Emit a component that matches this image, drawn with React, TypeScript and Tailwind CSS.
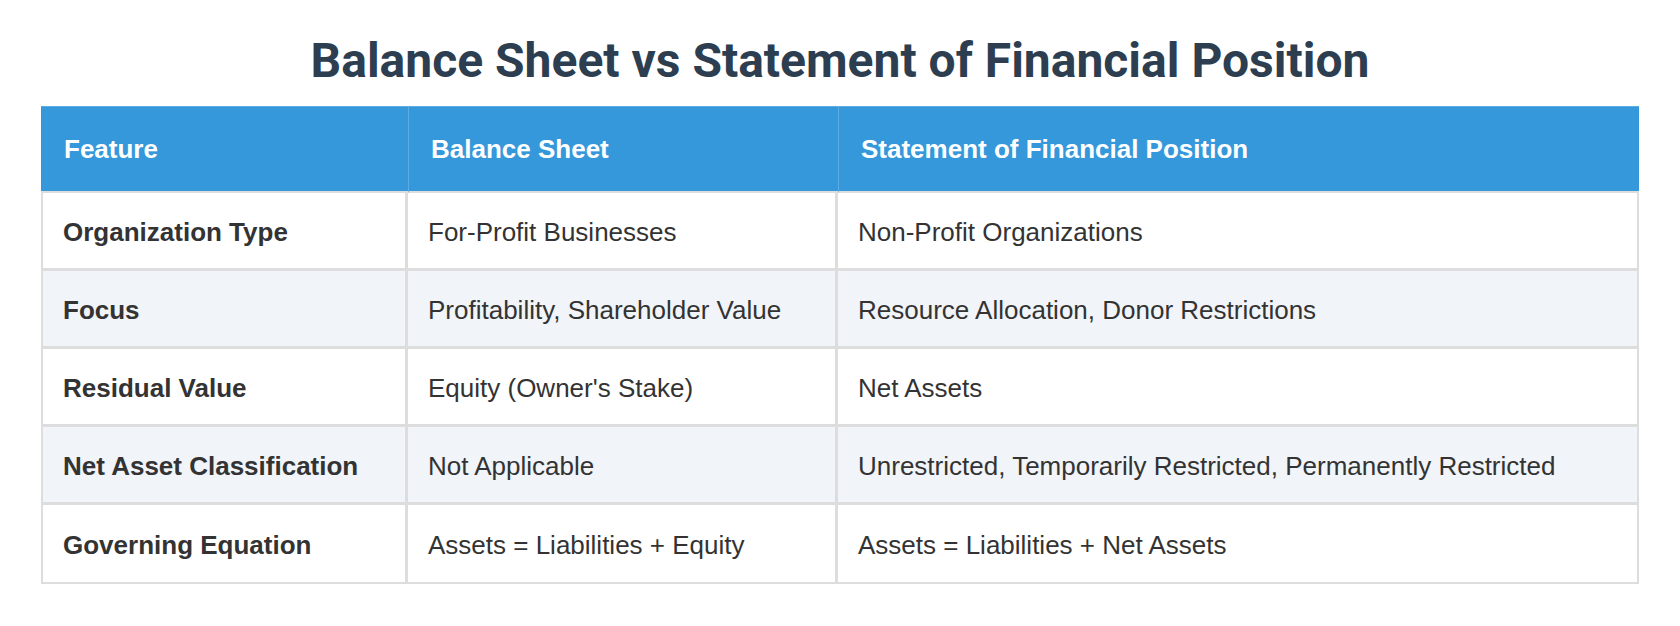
import React from 'react';

type Row = {
    feature: string;
    balance: string;
    statement: string;
};

const rows: Row[] = [
    { feature: 'Organization Type', balance: 'For-Profit Businesses', statement: 'Non-Profit Organizations' },
    { feature: 'Focus', balance: 'Profitability, Shareholder Value', statement: 'Resource Allocation, Donor Restrictions' },
    { feature: 'Residual Value', balance: "Equity (Owner's Stake)", statement: 'Net Assets' },
    { feature: 'Net Asset Classification', balance: 'Not Applicable', statement: 'Unrestricted, Temporarily Restricted, Permanently Restricted' },
    { feature: 'Governing Equation', balance: 'Assets = Liabilities + Equity', statement: 'Assets = Liabilities + Net Assets' },
];

const App: React.FC = () => {
    return (
        <div className="min-h-screen bg-white px-[41px] pt-[34px] font-['Liberation_Sans',Arial,sans-serif]">
            <h1 className="mb-[19px] text-center font-['Roboto',sans-serif] text-[48px] font-bold leading-[53px] text-[#2c3e50]">
                Balance Sheet vs Statement of Financial Position
            </h1>

            <div className="grid grid-cols-[367px_430px_1fr] text-[26px] text-[#333]">
                {/* header */}
                <div className="flex h-[87px] items-center border-t border-b-2 border-t-[#5dade2] border-b-[#dddddd] bg-[#3498db] px-[23px] font-bold text-white">
                    Feature
                </div>
                <div className="flex h-[87px] items-center border-t border-b-2 border-l border-t-[#5dade2] border-b-[#dddddd] border-l-[#5dade2] bg-[#3498db] px-[22px] font-bold text-white">
                    Balance Sheet
                </div>
                <div className="flex h-[87px] items-center border-t border-b-2 border-l border-t-[#5dade2] border-b-[#dddddd] border-l-[#5dade2] bg-[#3498db] px-[22px] font-bold text-white">
                    Statement of Financial Position
                </div>

                {rows.map((row, i) => {
                    const last = i === rows.length - 1;
                    const shaded = i % 2 === 1;
                    return (
                        <React.Fragment key={row.feature}>
                            <div
                                className={`flex items-center border-r-[3px] border-l-2 border-[#dddddd] px-5 pt-1 font-bold ${
                                    last ? 'h-[79px] border-b-2' : 'h-[78px] border-b-[3px]'
                                } ${shaded ? 'bg-[#f1f4f9]' : 'bg-white'}`}
                            >
                                {row.feature}
                            </div>
                            <div
                                className={`flex items-center border-r-[3px] border-[#dddddd] px-5 pt-1 ${
                                    last ? 'h-[79px] border-b-2' : 'h-[78px] border-b-[3px]'
                                } ${shaded ? 'bg-[#f1f4f9]' : 'bg-white'}`}
                            >
                                {row.balance}
                            </div>
                            <div
                                className={`flex items-center border-r-2 border-[#dddddd] px-5 pt-1 ${
                                    last ? 'h-[79px] border-b-2' : 'h-[78px] border-b-[3px]'
                                } ${shaded ? 'bg-[#f1f4f9]' : 'bg-white'}`}
                            >
                                {row.statement}
                            </div>
                        </React.Fragment>
                    );
                })}
            </div>
        </div>
    );
};

export default App;
